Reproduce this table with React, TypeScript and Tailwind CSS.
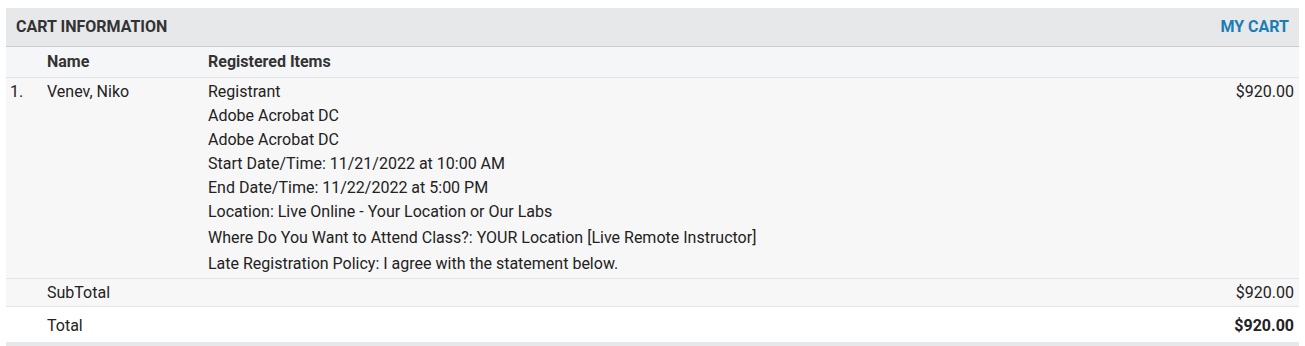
import React from "react";

const items = [
  { text: "Registrant", lh: "leading-[24px]" },
  { text: "Adobe Acrobat DC", lh: "leading-[24px]" },
  { text: "Adobe Acrobat DC", lh: "leading-[24px]" },
  { text: "Start Date/Time: 11/21/2022 at 10:00 AM", lh: "leading-[24px]" },
  { text: "End Date/Time: 11/22/2022 at 5:00 PM", lh: "leading-[24px]" },
  { text: "Location: Live Online - Your Location or Our Labs", lh: "leading-[24px]" },
  { text: "Where Do You Want to Attend Class?: YOUR Location [Live Remote Instructor]", lh: "leading-[28px]" },
  { text: "Late Registration Policy: I agree with the statement below.", lh: "leading-[24px]" },
];

export default function App() {
  return (
    <div className="bg-white w-[1305px] h-[346px] pt-2 px-[6px] font-['Roboto',sans-serif] text-[#222] text-[16px]">
      <div className="flex flex-col">
        {/* section header */}
        <div className="h-[39px] bg-[#e7e8ea] border-b border-[#cdcdcf] flex items-center justify-between pl-[10px] pr-[10px]">
          <span className="text-[16px] font-bold text-[#333]">CART INFORMATION</span>
          <span className="text-[16px] font-bold text-[#1a7db5]">MY CART</span>
        </div>

        {/* column headings */}
        <div className="h-[31px] bg-[#f5f6f7] border-b border-[#e2e3e4] flex items-center text-[16px] font-bold text-[#333]">
          <div className="w-[41px]" />
          <div className="w-[161px]">Name</div>
          <div>Registered Items</div>
        </div>

        {/* line item */}
        <div className="bg-[#f7f7f7] border-b border-[#e4e4e4] flex pt-[2px] pb-[2px]">
          <div className="w-[41px] pl-[4px] leading-[24px]">1.</div>
          <div className="w-[161px] leading-[24px]">Venev, Niko</div>
          <div className="flex-1">
            {items.map((it, i) => (
              <div key={i} className={it.lh}>
                {it.text}
              </div>
            ))}
          </div>
          <div className="pr-[5px] leading-[24px]">$920.00</div>
        </div>

        {/* subtotal */}
        <div className="h-[28px] bg-[#f7f7f7] border-b border-[#e4e4e4] flex items-center">
          <div className="w-[41px]" />
          <div className="flex-1">SubTotal</div>
          <div className="pr-[5px]">$920.00</div>
        </div>

        {/* total */}
        <div className="h-[35px] bg-white flex items-center pt-[2px]">
          <div className="w-[41px]" />
          <div className="flex-1">Total</div>
          <div className="pr-[5px] font-bold">$920.00</div>
        </div>

        <div className="h-[6px] bg-[#e7e8ea]" />
      </div>
    </div>
  );
}
